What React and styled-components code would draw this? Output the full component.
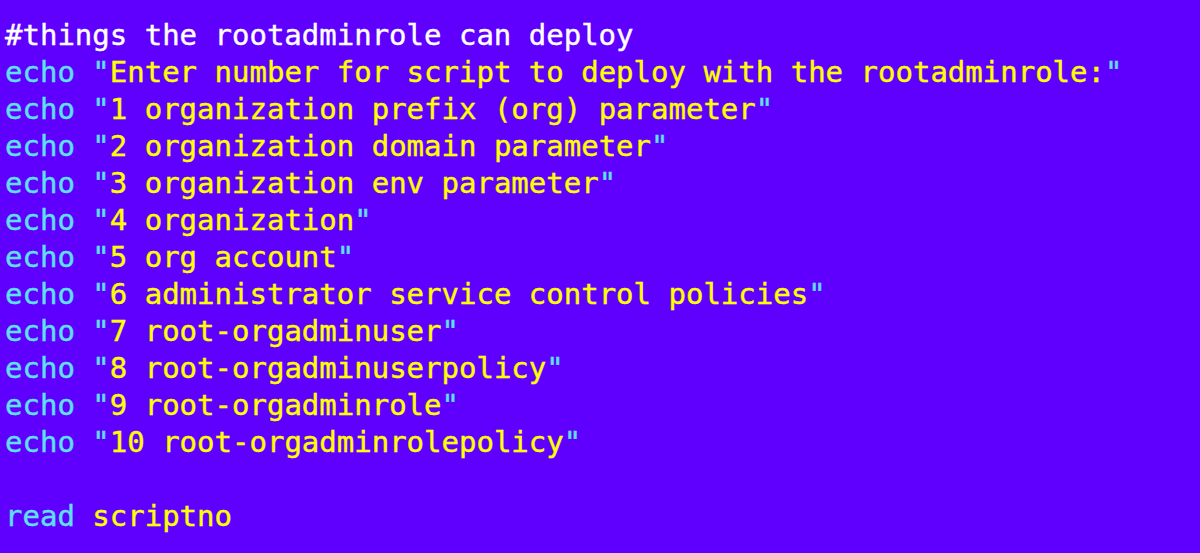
import styled, { createGlobalStyle } from "styled-components";

const GlobalStyle = createGlobalStyle`
    html, body {
        margin: 0;
        padding: 0;
        background: #5f00ff;
    }
`;

const lines = [
    "Enter number for script to deploy with the rootadminrole:",
    "1 organization prefix (org) parameter",
    "2 organization domain parameter",
    "3 organization env parameter",
    "4 organization",
    "5 org account",
    "6 administrator service control policies",
    "7 root-orgadminuser",
    "8 root-orgadminuserpolicy",
    "9 root-orgadminrole",
    "10 root-orgadminrolepolicy",
];

function EchoLine({ text }) {
    return (
        <Line>
            <Keyword>echo </Keyword>
            <Keyword>"</Keyword>
            <Str>{text}</Str>
            <Keyword>"</Keyword>
        </Line>
    );
}

export default function App() {
    return (
        <Terminal>
            <GlobalStyle />
            <Line><Comment>#things the rootadminrole can deploy</Comment></Line>
            {lines.map((text, index) => (<EchoLine key={index} text={text} />))}
            <Line />
            <Line>
                <Keyword>read </Keyword>
                <Str>scriptno</Str>
            </Line>
        </Terminal>
    );
}

const Terminal = styled.div`
    width: 1200px;
    height: 553px;
    box-sizing: border-box;
    padding: 17px 0px 0px 5px;
    background: #5f00ff;
    font-family: 'DejaVu Sans Mono', 'Liberation Mono', monospace;
    font-size: 29px;
    line-height: 37px;
    overflow: hidden;
`;

const Line = styled.div`
    height: 37px;
    white-space: pre;
    -webkit-text-stroke: 0.4px currentColor;
`;

const Comment = styled.span`
    color: #ffffff;
`;

const Keyword = styled.span`
    color: #5ee0f2;
`;

const Str = styled.span`
    color: #ffff00;
`;
